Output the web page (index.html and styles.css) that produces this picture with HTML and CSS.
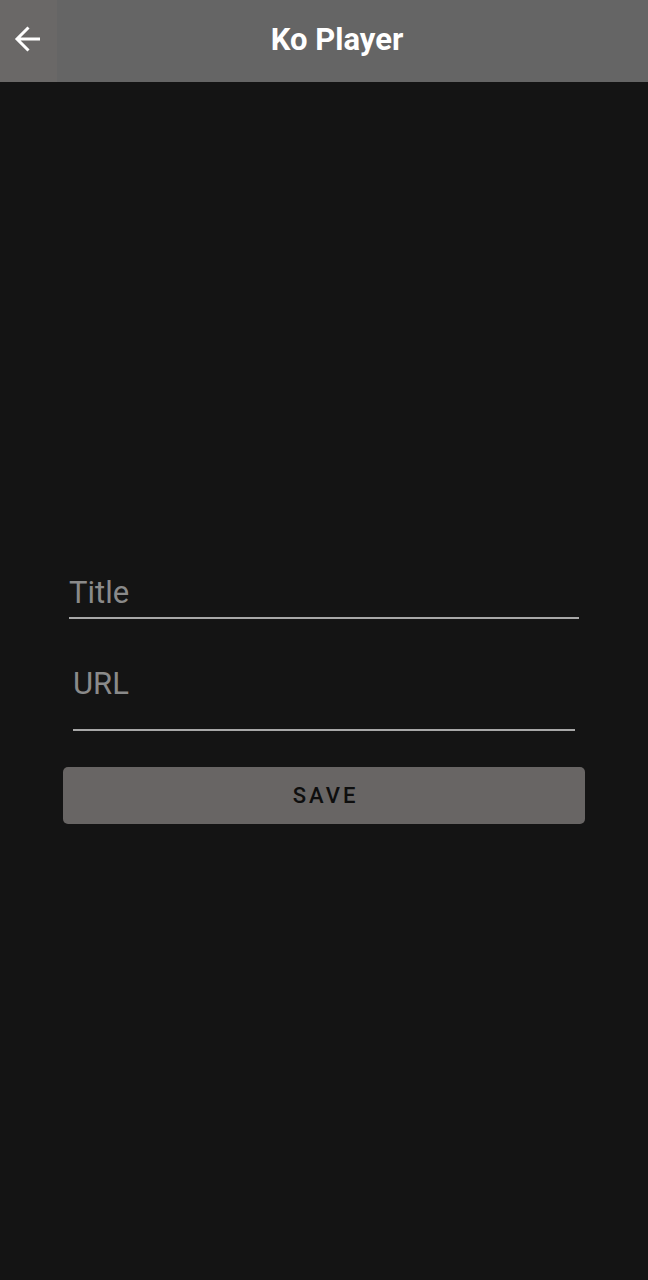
FILE: index.html
```html
<!DOCTYPE html>
<html>
<head>
<meta charset="utf-8">
<link rel="stylesheet" href="styles.css">
</head>
<body>
<div class="app">
  <header class="appbar">
    <div class="back">
      <svg class="back-icon" width="30" height="30" viewBox="0 0 30 30"><path d="M27 15H4M15.5 3.5L4 15l11.5 11.5" fill="none" stroke="#fff" stroke-width="3" stroke-linecap="butt" stroke-linejoin="miter"/></svg>
    </div>
    <div class="title">Ko Player</div>
  </header>
  <main class="content">
    <form class="form">
      <div class="field field-title"><span class="placeholder">Title</span></div>
      <div class="field field-url"><span class="placeholder">URL</span></div>
      <button type="button" class="save">SAVE</button>
    </form>
  </main>
</div>
</body>
</html>
```
FILE: styles.css
```css
html, body {
  margin: 0;
  padding: 0;
  background: #141414;
  font-family: Roboto, "Noto Sans", sans-serif;
}
.app {
  width: 648px;
  height: 1280px;
  display: flex;
  flex-direction: column;
}
.appbar {
  height: 82px;
  background: #656565;
  display: flex;
  align-items: center;
}
.back {
  width: 57px;
  height: 82px;
  background: #6a6867;
  display: flex;
  align-items: center;
  justify-content: center;
  padding-bottom: 4px;
  box-sizing: border-box;
}
.back-icon {
  margin-left: -1px;
}
.title {
  flex: 1;
  text-align: center;
  color: #fff;
  font-weight: 700;
  font-size: 31px;
  margin-right: 31px;
  margin-top: -3px;
}
.content {
  flex: 1;
  padding-top: 485px;
}
.form {
  display: flex;
  flex-direction: column;
}
.field {
  border-bottom: 2px solid #a8a8a8;
  color: #8a8a8a;
  font-size: 31px;
  line-height: 36px;
  box-sizing: border-box;
}
.field-title {
  margin-left: 69px;
  width: 510px;
  height: 52px;
  padding-top: 8px;
}
.field-url {
  margin-left: 73px;
  width: 502px;
  height: 98px;
  margin-top: 14px;
  padding-top: 33px;
}
.save {
  margin-left: 63px;
  width: 522px;
  height: 57px;
  margin-top: 36px;
  background: #686564;
  border: none;
  border-radius: 5px;
  color: #0e0e0e;
  font-family: Roboto, sans-serif;
  font-size: 22px;
  font-weight: 500;
  letter-spacing: 3px;
  padding: 0 0 0 3px;
}
```
